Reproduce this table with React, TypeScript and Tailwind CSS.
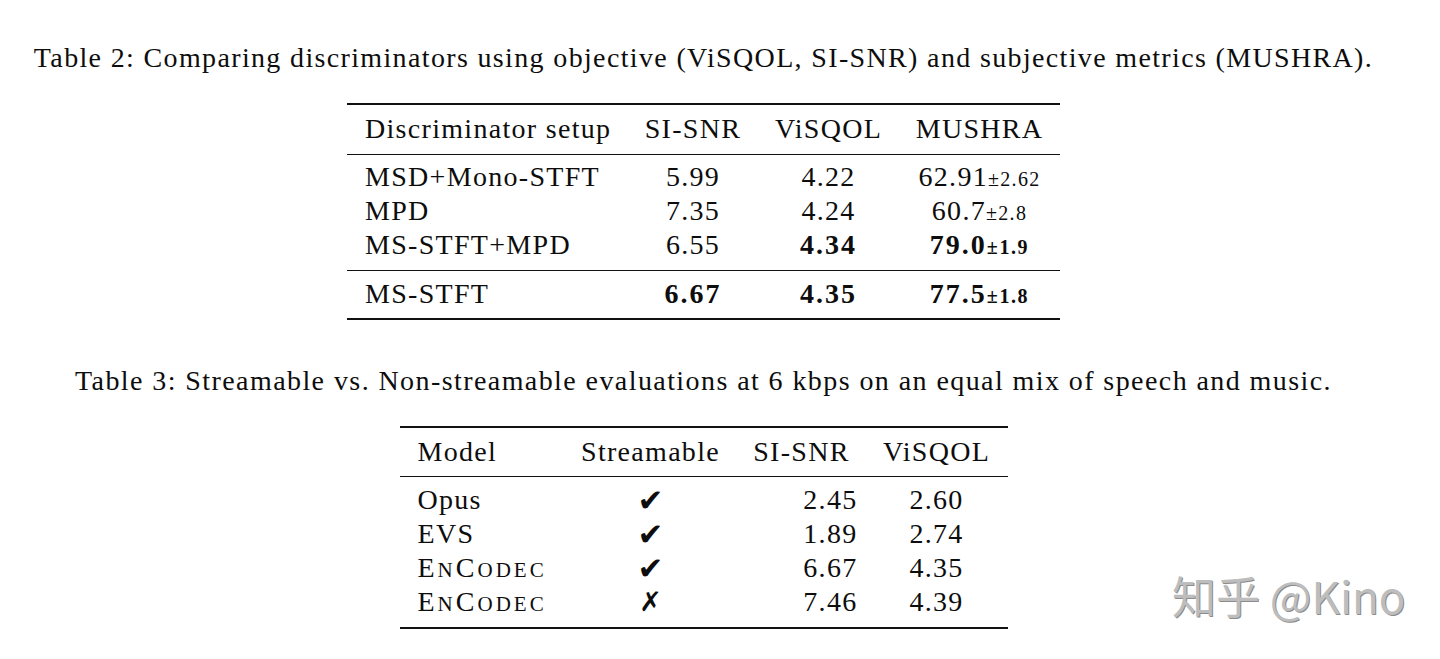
import React from "react";

const serif = "font-['Liberation_Serif',serif]";

function Pm({ v }: { v: string }) {
  return <span className="text-[20px] leading-none font-normal tracking-[1.3px]">±{v}</span>;
}
function PmB({ v }: { v: string }) {
  return <span className="text-[20px] leading-none font-bold tracking-[1.6px]">±{v}</span>;
}

function EnCodec() {
  return (
    <span className="tracking-[3px]">
      E<span className="text-[21px] leading-none">N</span>C<span className="text-[21px] leading-none">ODEC</span>
    </span>
  );
}

function Check({ x }: { x?: boolean }) {
  return (
    <div
      className={`text-center font-['DejaVu_Sans',sans-serif] leading-[34px] tracking-normal ${
        x ? "text-[27px] font-bold" : "text-[31px]"
      }`}
    >
      {x ? "✗" : "✔"}
    </div>
  );
}

const cols2 = "grid grid-cols-[281px_130px_141px_161px]";
const cols3 = "grid grid-cols-[164px_174px_128px_142px]";

export default function App() {
  return (
    <div className={`relative w-[1440px] h-[659px] bg-white text-[#0d0d0d] ${serif} text-[28px] leading-[34px] tracking-[1.3px]`}>
      <div className="flex flex-col items-center pr-[33px] pt-[41px]">
        <p className="whitespace-nowrap tracking-[1.35px]">
          Table 2: Comparing discriminators using objective (ViSQOL, SI-SNR) and subjective metrics (MUSHRA).
        </p>

        <div className="mt-[28px] w-[713px] flex flex-col">
          <div className="h-[2px] bg-[#111]" />
          <div className={`pt-[7px] pb-[8px] ${cols2}`}>
            <div className="pl-[18px] whitespace-nowrap">Discriminator setup</div>
            <div className="text-center">SI-SNR</div>
            <div className="text-center">ViSQOL</div>
            <div className="text-center">MUSHRA</div>
          </div>
          <div className="h-px bg-[#111]" />
          <div className={`pt-[5px] pb-[8px] ${cols2}`}>
            <div className="pl-[18px] whitespace-nowrap">MSD+Mono-STFT</div>
            <div className="text-center">5.99</div>
            <div className="text-center">4.22</div>
            <div className="text-center whitespace-nowrap">62.91<Pm v="2.62" /></div>
            <div className="pl-[18px]">MPD</div>
            <div className="text-center">7.35</div>
            <div className="text-center">4.24</div>
            <div className="text-center whitespace-nowrap">60.7<Pm v="2.8" /></div>
            <div className="pl-[18px] whitespace-nowrap">MS-STFT+MPD</div>
            <div className="text-center">6.55</div>
            <div className="text-center font-bold tracking-[2px]">4.34</div>
            <div className="text-center whitespace-nowrap font-bold tracking-[2px]">79.0<PmB v="1.9" /></div>
          </div>
          <div className="h-px bg-[#111]" />
          <div className={`pt-[6px] pb-[7px] ${cols2}`}>
            <div className="pl-[18px]">MS-STFT</div>
            <div className="text-center font-bold tracking-[2px]">6.67</div>
            <div className="text-center font-bold tracking-[2px]">4.35</div>
            <div className="text-center whitespace-nowrap font-bold tracking-[2px]">77.5<PmB v="1.8" /></div>
          </div>
          <div className="h-[2px] bg-[#111]" />
        </div>

        <p className="mt-[44px] whitespace-nowrap tracking-[1.42px]">
          Table 3: Streamable vs. Non-streamable evaluations at 6 kbps on an equal mix of speech and music.
        </p>

        <div className="mt-[28px] w-[608px] flex flex-col">
          <div className="h-[2px] bg-[#111]" />
          <div className={`pt-[7px] pb-[7px] ${cols3}`}>
            <div className="pl-[18px]">Model</div>
            <div className="text-center">Streamable</div>
            <div className="text-center">SI-SNR</div>
            <div className="text-center">ViSQOL</div>
          </div>
          <div className="h-px bg-[#111]" />
          <div className={`pt-[6px] pb-[8px] ${cols3} auto-rows-[34px]`}>
            <div className="pl-[18px]">Opus</div>
            <Check />
            <div className="text-right pr-[8px]">2.45</div>
            <div className="text-center">2.60</div>
            <div className="pl-[18px]">EVS</div>
            <Check />
            <div className="text-right pr-[8px]">1.89</div>
            <div className="text-center">2.74</div>
            <div className="pl-[18px] whitespace-nowrap"><EnCodec /></div>
            <Check />
            <div className="text-right pr-[8px]">6.67</div>
            <div className="text-center">4.35</div>
            <div className="pl-[18px] whitespace-nowrap"><EnCodec /></div>
            <Check x />
            <div className="text-right pr-[8px]">7.46</div>
            <div className="text-center">4.39</div>
          </div>
          <div className="h-[2px] bg-[#111]" />
        </div>
      </div>

      <div className="absolute left-[1172px] top-[569px] whitespace-nowrap font-['Noto_Sans_CJK_SC','Noto_Sans',sans-serif] text-[44px] leading-[52px] tracking-normal text-[#bdbdbd] [text-shadow:1px_1px_0_#8c8c8c]">
        知乎 @Kino
      </div>
    </div>
  );
}
